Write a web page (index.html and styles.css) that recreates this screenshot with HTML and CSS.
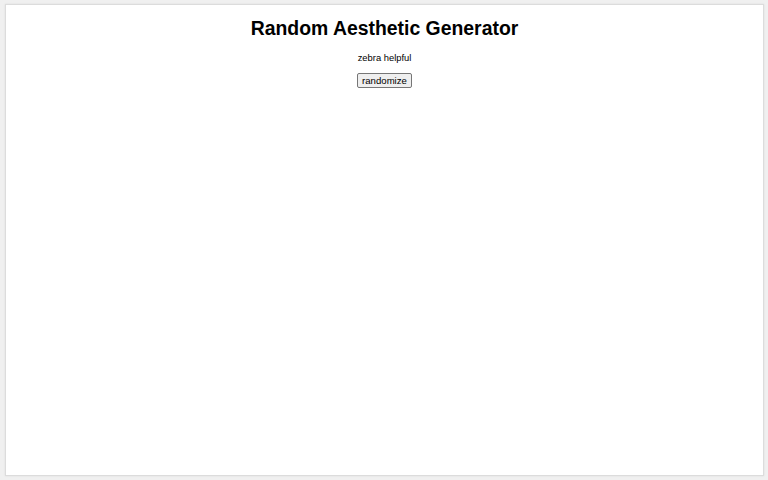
FILE: index.html
```html
<!DOCTYPE html>
<html>
<head>
<meta charset="utf-8">
<link rel="stylesheet" href="styles.css">
</head>
<body>
<div class="card">
  <h1 class="title">Random Aesthetic Generator</h1>
  <p class="words">zebra helpful</p>
  <button class="btn">randomize</button>
</div>
</body>
</html>
```
FILE: styles.css
```css
html, body {
  margin: 0;
  padding: 0;
  height: 100%;
}
body {
  background: #f0f0f0;
  padding: 4px 4px 4px 5px;
  box-sizing: border-box;
  font-family: "Liberation Sans", Arial, sans-serif;
}
.card {
  box-sizing: border-box;
  height: 472px;
  background: #fff;
  border: 1px solid #dcdcdc;
  box-shadow: 0 0 2px rgba(0,0,0,0.08);
  display: flex;
  flex-direction: column;
  align-items: center;
  padding-top: 12px;
}
.title {
  margin: 0;
  font-size: 19.4px;
  font-weight: bold;
  color: #000;
  line-height: 23px;
}
.words {
  margin: 12px 0 0;
  font-size: 9.4px;
  line-height: 11px;
  color: #000;
}
.btn {
  margin-top: 10px;
  font-family: "Liberation Sans", Arial, sans-serif;
  font-size: 9.6px;
  line-height: 11px;
  padding: 1px 4px;
  background: #efefef;
  border: 1px solid #767676;
  border-radius: 2px;
  color: #000;
}
```
